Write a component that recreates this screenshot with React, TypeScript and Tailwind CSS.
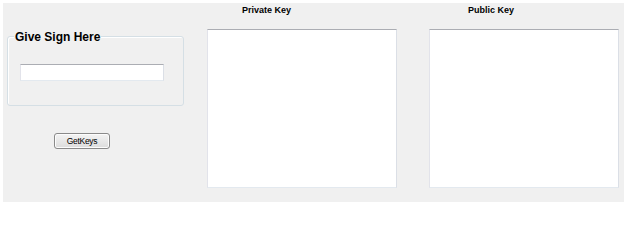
import React from 'react'

const font = { fontFamily: '"Liberation Sans", Arial, sans-serif' }

function KeyBox({ label, labelPad }: { label: string; labelPad: string }) {
  return (
    <div className="flex w-[190px] flex-col">
      <div className={`h-[26px] pt-[2px] text-[9px] leading-[11px] font-bold text-black ${labelPad}`}>
        {label}
      </div>
      <textarea
        readOnly
        className="h-[159px] w-full resize-none border border-t-[#abadb3] border-l-[#e2e3ea] border-r-[#dbdfe6] border-b-[#e3e9ef] bg-white outline-none"
      />
    </div>
  )
}

export default function App() {
  return (
    <div className="h-[202px] w-[627px] bg-white pl-[3px] pt-[3px]" style={font}>
      <div className="flex h-[199px] w-[621px] items-start bg-[#f0f0f0]">
        {/* Left column: group box + button */}
        <div className="flex w-[181px] flex-col pl-[4px] pt-[27px]">
          <div className="relative pt-[6px]">
            <div className="h-[70px] w-[177px] rounded-[3px] border border-[#d5dfe5] shadow-[inset_1px_1px_0_#ffffff]">
              <div className="pl-[12px] pt-[27px]">
                <input
                  readOnly
                  className="block h-[17px] w-[144px] border border-t-[#abadb3] border-l-[#e2e3ea] border-r-[#dbdfe6] border-b-[#e3e9ef] bg-white outline-none"
                />
              </div>
            </div>
            <span className="absolute left-[7px] top-0 bg-[#f0f0f0] px-[1px] text-[12px] leading-[14px] font-bold text-black">
              Give Sign Here
            </span>
          </div>
          <div className="pl-[47px] pt-[27px]">
            <button className="flex h-[16px] w-[56px] items-center justify-center rounded-[3px] border border-[#8a8a8a] bg-gradient-to-b from-[#f4f4f4] to-[#dcdcdc] text-[8.5px] leading-[10px] tracking-[-0.3px] text-black shadow-[inset_0_0_0_1px_#fcfcfc]">
              GetKeys
            </button>
          </div>
        </div>

        {/* Private key */}
        <div className="ml-[23px]">
          <KeyBox label="Private Key" labelPad="pl-[35px]" />
        </div>

        {/* Public key */}
        <div className="ml-[32px]">
          <KeyBox label="Public Key" labelPad="pl-[39px]" />
        </div>
      </div>
    </div>
  )
}
